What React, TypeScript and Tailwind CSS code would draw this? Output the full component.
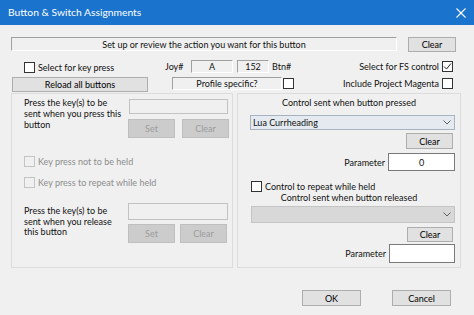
import React from "react";

// Small Win10-style building blocks
const Check = ({ checked = false, disabled = false }: { checked?: boolean; disabled?: boolean }) => (
  <div
    className={
      "w-[11px] h-[11px] flex-shrink-0 border flex items-center justify-center " +
      (disabled ? "border-[#c4c4c4] bg-[#f0f0f0]" : "border-[#333333] bg-white")
    }
  >
    {checked && (
      <svg width="9" height="9" viewBox="0 0 9 9">
        <polyline points="1,4.5 3.5,7 8,1.5" fill="none" stroke="#222" strokeWidth="1" />
      </svg>
    )}
  </div>
);

const Btn = ({
  label,
  className = "",
  disabled = false,
}: {
  label: string;
  className?: string;
  disabled?: boolean;
}) => (
  <div
    className={
      "flex items-center justify-center border flex-shrink-0 " +
      (disabled
        ? "bg-[#cccccc] border-[#bfbfbf] text-[#9c9c9c] "
        : "bg-[#e1e1e1] border-[#adadad] text-black ") +
      className
    }
  >
    {label}
  </div>
);

const Chevron = () => (
  <svg width="8" height="5" viewBox="0 0 8 5" className="flex-shrink-0">
    <polyline points="0.5,0.5 4,4 7.5,0.5" fill="none" stroke="#606060" strokeWidth="1" />
  </svg>
);

// Sunken 3D label border (Fixed3D)
const sunken = "border-t border-l border-b border-r border-t-[#a0a0a0] border-l-[#a0a0a0] border-b-white border-r-white";

export default function App() {
  return (
    <div className="w-[474px] h-[315px] bg-[#f0f0f0] flex flex-col overflow-hidden text-[9px] leading-[11px] text-[#111] font-['Lato','Noto_Sans',sans-serif]">
      {/* Title bar */}
      <div className="h-[25px] flex-shrink-0 bg-[#1a73cc] flex items-center pl-[8px] pr-[8px] text-white">
        <span className="text-[10.3px] flex-1">Button &amp; Switch Assignments</span>
        <svg width="10" height="10" viewBox="0 0 10 10">
          <line x1="0.5" y1="0.5" x2="9.5" y2="9.5" stroke="white" strokeWidth="1.1" />
          <line x1="9.5" y1="0.5" x2="0.5" y2="9.5" stroke="white" strokeWidth="1.1" />
        </svg>
      </div>

      <div className="flex flex-col pl-[11px]">
        {/* Description + Clear */}
        <div className="flex items-start mt-[12px]">
          <div className={"w-[386px] h-[14px] flex items-center justify-center " + sunken}>
            Set up or review the action you want for this button
          </div>
          <Btn label="Clear" className="ml-[11px] w-[48px] h-[15px]" />
        </div>

        {/* Selection row */}
        <div className="flex mt-[8px] h-[32px]">
          <div className="flex flex-col w-[137px] pl-[1px]">
            <div className="flex items-center gap-[3px] pl-[12px] mt-[2px]">
              <Check />
              <span>Select for key press</span>
            </div>
            <Btn label="Reload all buttons" className="mt-[4px] w-[136px] h-[15px]" />
          </div>

          <div className="flex flex-col ml-[17px]">
            <div className="flex items-center h-[13px]">
              <span className="w-[26px]">Joy#</span>
              <div className={"w-[42px] h-[13px] flex items-center justify-center " + sunken}>A</div>
              <div className={"ml-[4px] w-[32px] h-[13px] flex items-center justify-center " + sunken}>152</div>
              <span className="ml-[3px]">Btn#</span>
            </div>
            <div className="flex items-center mt-[4px] ml-[7px]">
              <div className={"w-[110px] h-[13px] flex items-center justify-center " + sunken}>Profile specific?</div>
              <div className="ml-[1px]">
                <Check />
              </div>
            </div>
          </div>

          <div className="flex-1 flex flex-col items-end pr-[21px]">
            <div className="flex items-center gap-[3px] mt-[1px]">
              <span>Select for FS control</span>
              <Check checked />
            </div>
            <div className="flex items-center gap-[3px] mt-[6px]">
              <span>Include Project Magenta</span>
              <Check />
            </div>
          </div>
        </div>

        {/* Group boxes */}
        <div className="flex mt-[1px] gap-[4px]">
          {/* Key press group */}
          <div className="w-[222px] h-[175px] border border-[#dcdcdc] flex flex-col pl-[12px] pt-[3px]">
            <div className="flex">
              <div className="w-[104px] leading-[11px]">
                Press the key(s) to be
                <br />
                sent when you press this
                <br />
                button
              </div>
              <div className="flex flex-col pt-[2px]">
                <div className="ml-[1px] w-[99px] h-[15px] border border-[#c2c2c2] bg-[#f0f0f0]" />
                <div className="flex gap-[7px] mt-[5px]">
                  <Btn label="Set" disabled className="w-[47px] h-[19px]" />
                  <Btn label="Clear" disabled className="w-[47px] h-[19px]" />
                </div>
              </div>
            </div>

            <div className="flex items-center gap-[3px] mt-[18px] text-[#8d8d8d]">
              <Check disabled />
              <span>Key press not to be held</span>
            </div>
            <div className="flex items-center gap-[3px] mt-[10px] text-[#8d8d8d]">
              <Check disabled />
              <span>Key press to repeat while held</span>
            </div>

            <div className="flex mt-[15px]">
              <div className="w-[104px] pt-[3px] leading-[10.5px]">
                Press the key(s) to be
                <br />
                sent when you release
                <br />
                this button
              </div>
              <div className="flex flex-col">
                <div className="w-[100px] h-[17px] border border-[#c2c2c2] bg-[#f0f0f0]" />
                <div className="flex gap-[5px] mt-[4px]">
                  <Btn label="Set" disabled className="w-[47px] h-[19px]" />
                  <Btn label="Clear" disabled className="w-[47px] h-[19px]" />
                </div>
              </div>
            </div>
          </div>

          {/* FS control group */}
          <div className="w-[224px] h-[175px] border border-[#dcdcdc] flex flex-col pt-[3px]">
            <div className="text-center">Control sent when button pressed</div>
            <div className="ml-[12px] mt-[7px] w-[205px] h-[15px] border border-[#a6b3c0] bg-[#e4eaf0] flex items-center pl-[2px] pr-[3px]">
              <span className="flex-1">Lua Currheading</span>
              <Chevron />
            </div>
            <Btn label="Clear" className="ml-[168px] mt-[3px] w-[47px] h-[16px]" />
            <div className="w-[217px] flex justify-end items-center mt-[4px]">
              <span className="mr-[3px]">Parameter</span>
              <div className="w-[67px] h-[18px] border border-[#7a7a7a] bg-white flex items-center justify-center">0</div>
            </div>
            <div className="flex items-center gap-[3px] ml-[13px] mt-[10px]">
              <Check />
              <span>Control to repeat while held</span>
            </div>
            <div className="text-center">Control sent when button released</div>
            <div className="ml-[13px] mt-[3px] w-[204px] h-[17px] border border-[#c4c4c4] bg-[#d8d8d8] flex items-center justify-end pr-[3px]">
              <Chevron />
            </div>
            <Btn label="Clear" className="ml-[169px] mt-[4px] w-[46px] h-[15px]" />
            <div className="w-[217px] flex justify-end items-center mt-[2px]">
              <span className="mr-[3px]">Parameter</span>
              <div className="w-[66px] h-[19px] border border-[#7a7a7a] bg-white" />
            </div>
          </div>
        </div>

        {/* Dialog buttons */}
        <div className="flex justify-end gap-[31px] mt-[22px] pr-[23px]">
          <Btn label="OK" className="w-[59px] h-[16px]" />
          <Btn label="Cancel" className="w-[59px] h-[16px]" />
        </div>
      </div>
    </div>
  );
}
